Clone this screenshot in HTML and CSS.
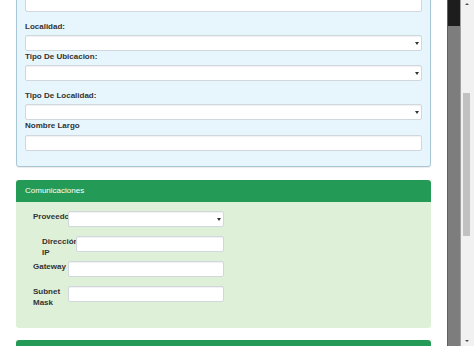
FILE: index.html
```html
<!DOCTYPE html>
<html lang="es">
<head>
  <meta charset="UTF-8" />
  <meta name="viewport" content="width=device-width, initial-scale=1.0"/>
  <title>Ubicacion</title>
  <link rel="stylesheet" href="styles.css">
</head>
<body>

  <div class="screen">
    <main class="content">

      <section class="panel panel-info">
        <input class="field" type="text">

        <label class="field-label gap-lg">Localidad:</label>
        <div class="select-wrap"><select class="field"><option></option></select></div>

        <label class="field-label gap-sm">Tipo De Ubicacion:</label>
        <div class="select-wrap"><select class="field"><option></option></select></div>

        <label class="field-label gap-lg">Tipo De Localidad:</label>
        <div class="select-wrap"><select class="field"><option></option></select></div>

        <label class="field-label gap-sm">Nombre Largo</label>
        <input class="field last" type="text">
      </section>

      <section class="panel panel-success">
        <div class="panel-heading">Comunicaciones</div>
        <div class="panel-body">
          <div class="form-row">
            <label class="row-label nowrap">Proveedor</label>
            <div class="select-wrap row-field"><select class="field"><option></option></select></div>
          </div>
          <div class="form-row">
            <label class="row-label indent">Dirección IP</label>
            <input class="field row-field short" type="text">
          </div>
          <div class="form-row">
            <label class="row-label">Gateway</label>
            <input class="field row-field" type="text">
          </div>
          <div class="form-row">
            <label class="row-label">Subnet Mask</label>
            <input class="field row-field" type="text">
          </div>
        </div>
      </section>

      <section class="panel panel-success">
        <div class="panel-heading"></div>
      </section>

    </main>

    <div class="side-strip">
      <div class="strip-top"></div>
    </div>

    <div class="scrollbar">
      <div class="arrow up"></div>
      <div class="thumb"></div>
      <div class="arrow down"></div>
    </div>
  </div>

</body>
</html>
```

FILE: styles.css
```css
body {
  margin: 0;
  background: #ffffff;
  font-family: 'Liberation Sans', Arial, sans-serif;
  color: #333;
  overflow: hidden;
}

.screen {
  display: flex;
  height: 346px;
  overflow: hidden;
}

.content {
  width: 447px;
  flex: none;
}

/* panels */

.panel {
  margin: 0 16px 12px 16px;
  border-radius: 3px;
  box-sizing: border-box;
}

.panel-info {
  margin-top: -20px;
  margin-bottom: 13px;
  padding: 15px 8px;
  background: #e7f6fd;
  border: 1px solid #a9c6d6;
  box-shadow: 0 1px 1px rgba(0, 0, 0, 0.08);
}

.panel-success {
  overflow: hidden;
}

.panel-heading {
  height: 22px;
  line-height: 22px;
  padding-left: 9px;
  background: #239b57;
  color: #fff;
  font-size: 8px;
}

.panel-body {
  background: #dff0d8;
  padding: 9px 0 17px 0;
}

/* fields */

.field {
  display: block;
  width: 100%;
  height: 16px;
  margin: 0;
  padding: 0 4px;
  box-sizing: border-box;
  background: #fff;
  border: 1px solid #d0d8dd;
  border-radius: 2px;
  box-shadow: inset 0 1px 1px rgba(0, 0, 0, 0.06);
  font-family: inherit;
  font-size: 8px;
  -webkit-appearance: none;
  appearance: none;
  outline: none;
}

.field.last {
  margin-top: 4px;
}

.select-wrap {
  position: relative;
  margin-top: 3px;
}

.select-wrap::after {
  content: '';
  position: absolute;
  right: 3px;
  top: 7px;
  border-left: 2px solid transparent;
  border-right: 2px solid transparent;
  border-top: 3px solid #333;
}

.field-label {
  display: block;
  font-size: 8px;
  font-weight: bold;
  line-height: 10px;
}

.gap-lg {
  margin-top: 10px;
}

.gap-sm {
  margin-top: 1px;
}

/* comunicaciones rows */

.form-row {
  display: flex;
  align-items: flex-start;
  height: 25px;
  padding-left: 17px;
}

.row-label {
  width: 35px;
  flex: none;
  overflow: hidden;
  font-size: 8px;
  font-weight: bold;
  line-height: 11px;
}

.row-label.nowrap {
  white-space: nowrap;
}

.row-label.indent {
  margin-left: 9px;
  width: 34px;
}

.row-field {
  width: 156px;
  flex: none;
  margin-top: 0;
}

.row-field.short {
  width: 148px;
}

/* right side */

.side-strip {
  width: 14px;
  flex: none;
  background: #7d7d7d;
  border-left: 1px solid #606060;
  border-right: 1px solid #a0a0a0;
  box-sizing: border-box;
}

.strip-top {
  height: 26px;
  background: #1d1d1d;
}

.scrollbar {
  width: 13px;
  flex: none;
  display: flex;
  flex-direction: column;
  background: #f1f1f1;
}

.thumb {
  width: 7px;
  height: 143px;
  margin: 88px 0 0 2px;
  background: #c1c1c1;
}

.arrow {
  width: 0;
  height: 0;
  margin-left: 4px;
  border-left: 2px solid transparent;
  border-right: 2px solid transparent;
}

.arrow.up {
  margin-top: 3px;
  border-bottom: 2px solid #505050;
}

.arrow.down {
  margin-top: auto;
  margin-bottom: 4px;
  border-top: 2px solid #505050;
}
```
